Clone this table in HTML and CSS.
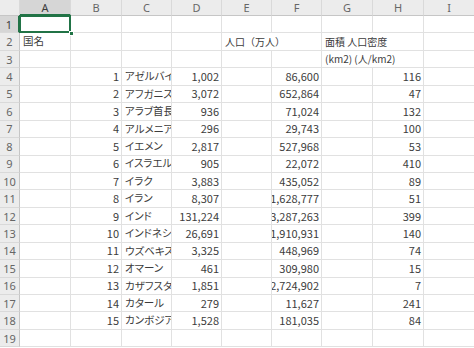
FILE: index.html
```html
<!DOCTYPE html>
<html lang="ja">
<head>
<meta charset="utf-8">
<link rel="stylesheet" href="styles.css">
</head>
<body>
<div class="sheet">
  <div class="ch corner"></div>
  <div class="ch sel">A</div><div class="ch">B</div><div class="ch">C</div><div class="ch">D</div><div class="ch">E</div><div class="ch">F</div><div class="ch">G</div><div class="ch">H</div><div class="ch last">I</div>

  <div class="rh sel">1</div>
  <div class="c a1"><span class="handle"></span></div><div class="c"></div><div class="c"></div><div class="c"></div><div class="c"></div><div class="c"></div><div class="c"></div><div class="c"></div><div class="c last"></div>

  <div class="rh">2</div>
  <div class="c t">国名</div><div class="c"></div><div class="c"></div><div class="c"></div><div class="c t hd span2">人口（万人）</div><div class="c t hd span2">面積 人口密度</div><div class="c last"></div>

  <div class="rh">3</div>
  <div class="c"></div><div class="c"></div><div class="c"></div><div class="c"></div><div class="c"></div><div class="c"></div><div class="c t hd span2">(km2)&nbsp;(人/km2)</div><div class="c last"></div>

  <div class="rh">4</div>
  <div class="c"></div><div class="c n">1</div><div class="c t">アゼルバイジャン</div><div class="c n">1,002</div><div class="c"></div><div class="c n">86,600</div><div class="c"></div><div class="c n">116</div><div class="c last"></div>

  <div class="rh">5</div>
  <div class="c"></div><div class="c n">2</div><div class="c t">アフガニスタン</div><div class="c n">3,072</div><div class="c"></div><div class="c n">652,864</div><div class="c"></div><div class="c n">47</div><div class="c last"></div>

  <div class="rh">6</div>
  <div class="c"></div><div class="c n">3</div><div class="c t">アラブ首長国連邦</div><div class="c n">936</div><div class="c"></div><div class="c n">71,024</div><div class="c"></div><div class="c n">132</div><div class="c last"></div>

  <div class="rh">7</div>
  <div class="c"></div><div class="c n">4</div><div class="c t">アルメニア</div><div class="c n">296</div><div class="c"></div><div class="c n">29,743</div><div class="c"></div><div class="c n">100</div><div class="c last"></div>

  <div class="rh">8</div>
  <div class="c"></div><div class="c n">5</div><div class="c t">イエメン</div><div class="c n">2,817</div><div class="c"></div><div class="c n">527,968</div><div class="c"></div><div class="c n">53</div><div class="c last"></div>

  <div class="rh">9</div>
  <div class="c"></div><div class="c n">6</div><div class="c t">イスラエル</div><div class="c n">905</div><div class="c"></div><div class="c n">22,072</div><div class="c"></div><div class="c n">410</div><div class="c last"></div>

  <div class="rh">10</div>
  <div class="c"></div><div class="c n">7</div><div class="c t">イラク</div><div class="c n">3,883</div><div class="c"></div><div class="c n">435,052</div><div class="c"></div><div class="c n">89</div><div class="c last"></div>

  <div class="rh">11</div>
  <div class="c"></div><div class="c n">8</div><div class="c t">イラン</div><div class="c n">8,307</div><div class="c"></div><div class="c n">1,628,777</div><div class="c"></div><div class="c n">51</div><div class="c last"></div>

  <div class="rh">12</div>
  <div class="c"></div><div class="c n">9</div><div class="c t">インド</div><div class="c n">131,224</div><div class="c"></div><div class="c n">3,287,263</div><div class="c"></div><div class="c n">399</div><div class="c last"></div>

  <div class="rh">13</div>
  <div class="c"></div><div class="c n">10</div><div class="c t">インドネシア</div><div class="c n">26,691</div><div class="c"></div><div class="c n">1,910,931</div><div class="c"></div><div class="c n">140</div><div class="c last"></div>

  <div class="rh">14</div>
  <div class="c"></div><div class="c n">11</div><div class="c t">ウズベキスタン</div><div class="c n">3,325</div><div class="c"></div><div class="c n">448,969</div><div class="c"></div><div class="c n">74</div><div class="c last"></div>

  <div class="rh">15</div>
  <div class="c"></div><div class="c n">12</div><div class="c t">オマーン</div><div class="c n">461</div><div class="c"></div><div class="c n">309,980</div><div class="c"></div><div class="c n">15</div><div class="c last"></div>

  <div class="rh">16</div>
  <div class="c"></div><div class="c n">13</div><div class="c t">カザフスタン</div><div class="c n">1,851</div><div class="c"></div><div class="c n">2,724,902</div><div class="c"></div><div class="c n">7</div><div class="c last"></div>

  <div class="rh">17</div>
  <div class="c"></div><div class="c n">14</div><div class="c t">カタール</div><div class="c n">279</div><div class="c"></div><div class="c n">11,627</div><div class="c"></div><div class="c n">241</div><div class="c last"></div>

  <div class="rh">18</div>
  <div class="c"></div><div class="c n">15</div><div class="c t">カンボジア</div><div class="c n">1,528</div><div class="c"></div><div class="c n">181,035</div><div class="c"></div><div class="c n">84</div><div class="c last"></div>

  <div class="rh">19</div>
  <div class="c"></div><div class="c"></div><div class="c"></div><div class="c"></div><div class="c"></div><div class="c"></div><div class="c"></div><div class="c"></div><div class="c last"></div>
</div>
</body>
</html>
```

FILE: styles.css
```css
html, body {
  margin: 0;
  padding: 0;
  background: #ffffff;
  overflow: hidden;
}

.sheet {
  display: grid;
  grid-template-columns: 20px 51px 51px 50px 50px 50px 50px 51px 51px 50px;
  grid-template-rows: 16px repeat(19, 17.44px);
  width: 474px;
  font-family: "Noto Sans CJK JP", "Noto Sans", sans-serif;
  font-size: 11px;
  color: #3c3c3c;
}

.ch {
  background: #ececec;
  color: #666666;
  border-right: 1px solid #d9d9d9;
  border-bottom: 1px solid #c6c6c6;
  display: flex;
  align-items: center;
  justify-content: center;
  font-family: "Noto Sans", "Noto Sans CJK JP", sans-serif;
  font-size: 11px;
  box-sizing: border-box;
}

.ch.sel {
  background: #d6d6d6;
  color: #3c3c3c;
  border-bottom: 2px solid #217346;
}

.ch.last {
  border-right: none;
}

.rh {
  background: #ececec;
  color: #666666;
  border-right: 1px solid #c6c6c6;
  border-bottom: 1px solid #d9d9d9;
  display: flex;
  align-items: center;
  justify-content: center;
  font-family: "Noto Sans", "Noto Sans CJK JP", sans-serif;
  font-size: 11px;
  box-sizing: border-box;
}

.rh.sel {
  background: #d6d6d6;
  color: #3c3c3c;
  border-right: 2px solid #217346;
}

.c {
  border-right: 1px solid #e1e1e1;
  border-bottom: 1px solid #e1e1e1;
  box-sizing: border-box;
  display: flex;
  align-items: center;
  white-space: nowrap;
  overflow: hidden;
  line-height: 1;
}

.c.last {
  border-right: none;
}

.c.t {
  padding-left: 3px;
  justify-content: flex-start;
  font-size: 10.5px;
  font-feature-settings: "palt" 1;
}

.c.t.hd {
  font-feature-settings: normal;
  font-size: 10px;
}

.c.n {
  padding-right: 2px;
  justify-content: flex-end;
}

.c.span2 {
  grid-column: span 2;
}

.c.a1 {
  position: relative;
  overflow: visible;
  border: none;
  box-shadow: inset 0 0 0 2px #217346;
  margin: -1px 0 0 -1px;
  width: calc(100% + 1px);
  height: calc(100% + 1px);
}

.handle {
  position: absolute;
  right: -3px;
  bottom: -3px;
  width: 5px;
  height: 5px;
  background: #217346;
  border: 1px solid #ffffff;
  box-sizing: border-box;
}
```
